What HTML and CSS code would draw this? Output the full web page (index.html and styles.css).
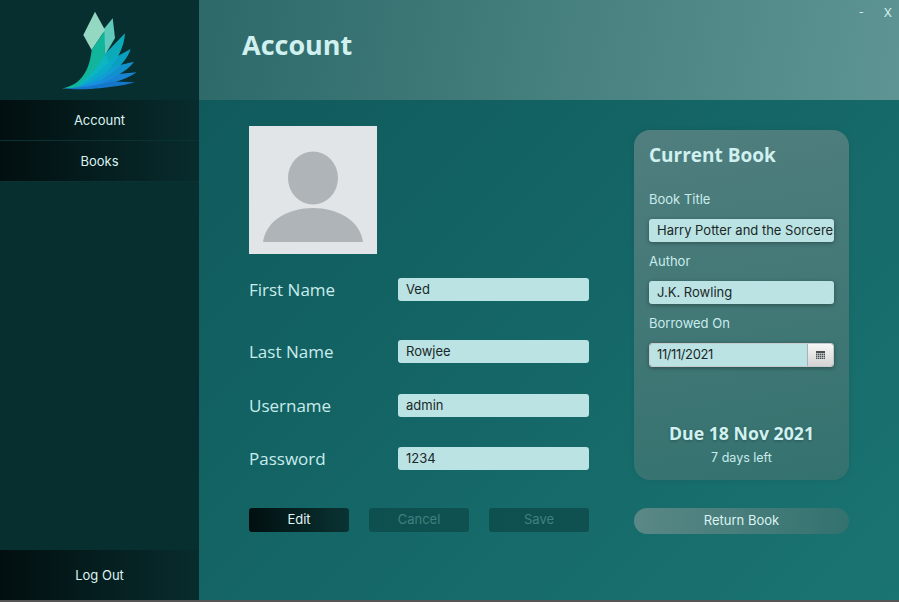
FILE: index.html
```html
<!DOCTYPE html>
<html lang="en">
<head>
    <meta charset="UTF-8">
    <meta name="viewport" content="width=device-width, initial-scale=1.0">
    <title>Account</title>
    <link rel="stylesheet" href="styles.css">
</head>
<body>
    <div id="window">
        <aside id="sidebar">
            <div id="logo">
                <svg width="100" height="90" viewBox="0 0 100 90">
                    <polygon points="62.7,13.3 53,25 55,50 65,33" fill="#5fcabb"/>
                    <polygon points="45,6.7 33.3,30 41.7,45 55,25" fill="#95d8c2"/>
                    <path d="M12 83.5 C30 80 39 68 41.7 45 L54.5 26 L55 50 L62 62 L40 83 Z" fill="#10b59c"/>
                    <path d="M28 80 C42 70 50 58 55 49 L75 28.3 C74 42 68 54 60 62 L40 80 Z" fill="#0db4c6" opacity="0.92"/>
                    <path d="M30 80 C44 72 54 62 64 53 L80.7 44 C78 52 72 60 64 66 L42 82 Z" fill="#0aa9cb" opacity="0.92"/>
                    <path d="M28 82 C44 76 56 68 66 61 L84 56.7 C80 62 74 67 66 71 L42 83 Z" fill="#129ad9" opacity="0.92"/>
                    <path d="M22 83 C40 80 56 74 68 69 L86.7 67.3 C80 72 72 75 62 78 L40 84 Z" fill="#1a8ce0" opacity="0.92"/>
                    <path d="M12 83.5 C30 83 50 80 62 76.5 L85 77.3 C72 81 56 83 40 84 C28 84.5 20 84 12 83.5 Z" fill="#1477cc"/>
                </svg>
            </div>
            <nav id="menu">
                <a class="nav-item">Account</a>
                <a class="nav-item">Books</a>
            </nav>
            <a class="nav-item logout">Log Out</a>
        </aside>

        <div id="content">
            <header id="header">
                <h1>Account</h1>
                <div id="controls">
                    <span class="minimize">-</span>
                    <span>X</span>
                </div>
            </header>

            <main id="main">
                <section id="profile">
                    <svg class="avatar" width="128" height="128" viewBox="0 0 128 128">
                        <rect width="128" height="128" fill="#e2e5e8"/>
                        <ellipse cx="64" cy="52" rx="25" ry="26.5" fill="#afb4b8"/>
                        <path d="M14 116 C17 94 40 82 64 82 C88 82 111 94 114 116 Z" fill="#afb4b8"/>
                    </svg>

                    <div id="fields">
                        <div class="field-row first">
                            <label>First Name</label>
                            <div class="text-field">Ved</div>
                        </div>
                        <div class="field-row second">
                            <label>Last Name</label>
                            <div class="text-field">Rowjee</div>
                        </div>
                        <div class="field-row third">
                            <label>Username</label>
                            <div class="text-field">admin</div>
                        </div>
                        <div class="field-row">
                            <label>Password</label>
                            <div class="text-field">1234</div>
                        </div>
                    </div>

                    <div id="buttons">
                        <button class="btn active">Edit</button>
                        <button class="btn">Cancel</button>
                        <button class="btn">Save</button>
                    </div>
                </section>

                <section id="book">
                    <div id="card">
                        <h2>Current Book</h2>
                        <div class="card-label first-label">Book Title</div>
                        <div class="text-field card-field">Harry Potter and the Sorcerer's Stone</div>
                        <div class="card-label">Author</div>
                        <div class="text-field card-field">J.K. Rowling</div>
                        <div class="card-label">Borrowed On</div>
                        <div class="date-picker">
                            <div class="date-value">11/11/2021</div>
                            <div class="date-btn">
                                <svg width="9" height="8" viewBox="0 0 9 8">
                                    <rect width="9" height="8" fill="#4a4f52"/>
                                    <path d="M0 2.5H9M0 4.5H9M0 6.5H9M1.5 2V8M3.5 2V8M5.5 2V8M7.5 2V8" stroke="#d5d8d9" stroke-width="0.6"/>
                                </svg>
                            </div>
                        </div>
                        <div id="due">
                            <div class="due-date">Due 18 Nov 2021</div>
                            <div class="days-left">7 days left</div>
                        </div>
                    </div>
                    <button id="returnBtn">Return Book</button>
                </section>
            </main>
        </div>
    </div>
</body>
</html>
```

FILE: styles.css
```css
* {
    box-sizing: border-box;
}

html, body {
    margin: 0;
    height: 100%;
    overflow: hidden;
}

body {
    background-color: #555;
    font-family: 'Inter', sans-serif;
    color: #c9ecec;
}

#window {
    display: flex;
    height: 600px;
}

#sidebar {
    width: 199px;
    display: flex;
    flex-direction: column;
    background: #082f30;
}

#logo {
    height: 100px;
    padding: 5px 0 0 50px;
}

#logo svg {
    display: block;
}

#menu {
    flex: 1;
    display: flex;
    flex-direction: column;
}

.nav-item {
    display: flex;
    align-items: center;
    justify-content: center;
    height: 41px;
    font-size: 13px;
    color: #dcf3f3;
    background: linear-gradient(to right, #020f10, #082c2d);
    border-bottom: 1px solid #0a3232;
}

.logout {
    height: 50px;
    border-bottom: none;
}

#content {
    flex: 1;
    display: flex;
    flex-direction: column;
    position: relative;
}

#header {
    height: 100px;
    display: flex;
    align-items: center;
    padding: 0 0 12px 43px;
    background: linear-gradient(100deg, #2c6968, #5e9594);
}

h1 {
    margin: 0;
    font-family: 'Open Sans', sans-serif;
    font-size: 27px;
    font-weight: 700;
    color: #d0f1f0;
}

#controls {
    position: absolute;
    top: 5px;
    right: 7px;
    display: flex;
    gap: 20px;
    font-size: 12px;
    color: #d5efef;
}

.minimize {
    font-size: 11px;
}

#main {
    flex: 1;
    display: flex;
    gap: 45px;
    padding: 26px 0 0 50px;
    background: linear-gradient(135deg, #105a5c, #1a7472);
}

#profile {
    width: 340px;
}

.avatar {
    display: block;
}

#fields {
    margin-top: 24px;
}

.field-row {
    display: flex;
    align-items: center;
    height: 23px;
    margin-bottom: 30px;
}

.field-row.first {
    margin-bottom: 39px;
}

.field-row.second {
    margin-bottom: 31px;
}

.field-row:last-child {
    margin-bottom: 38px;
}

.field-row label {
    width: 149px;
    font-family: 'Open Sans', sans-serif;
    font-size: 17px;
    color: #c9ecec;
}

.text-field {
    width: 191px;
    height: 23px;
    line-height: 22px;
    padding: 0 8px;
    font-size: 13px;
    color: #182828;
    background: #bce3e3;
    border-radius: 3px;
    white-space: nowrap;
    overflow: hidden;
}

#buttons {
    display: flex;
    gap: 20px;
}

.btn {
    width: 100px;
    height: 24px;
    padding: 0 0 2px;
    border: none;
    border-radius: 3px;
    font-family: 'Inter', sans-serif;
    font-size: 13px;
    color: #40807f;
    background: linear-gradient(to right, #0e4f50, #0f5150);
}

.btn.active {
    color: #e2f5f5;
    background: linear-gradient(to right, #020f10, #0a3333);
}

#book {
    width: 215px;
    padding-top: 4px;
}

#card {
    height: 350px;
    padding: 12px 15px 0;
    border-radius: 16px;
    background: linear-gradient(170deg, #507e7e, #34726f);
    display: flex;
    flex-direction: column;
    box-shadow: 0 0 6px rgba(0, 0, 0, 0.08);
}

h2 {
    margin: 0;
    height: 26px;
    font-family: 'Open Sans', sans-serif;
    font-size: 19px;
    line-height: 26px;
    font-weight: 700;
    color: #d0f1f0;
}

.card-label {
    height: 16px;
    margin: 11px 0 12px;
    line-height: 16px;
    font-size: 13px;
    color: #c9ecec;
}

.card-label.first-label {
    margin-top: 23px;
}

.card-field {
    width: 185px;
    flex: none;
    box-shadow: 0 1px 4px rgba(0, 0, 0, 0.35);
}

.date-picker {
    display: flex;
    width: 185px;
    height: 24px;
    flex: none;
    border-radius: 3px;
    overflow: hidden;
    border: 1px solid #c6cccc;
    box-shadow: 0 1px 4px rgba(0, 0, 0, 0.35);
}

.date-value {
    flex: 1;
    line-height: 21px;
    padding-left: 7px;
    font-size: 13px;
    letter-spacing: -0.4px;
    color: #182828;
    background: #bce3e3;
}

.date-btn {
    width: 26px;
    display: flex;
    align-items: center;
    justify-content: center;
    background: linear-gradient(to bottom, #f6f6f6, #d4d4d4);
    border-left: 1px solid #a9b2b2;
}

#due {
    margin-top: 54px;
    text-align: center;
}

.due-date {
    font-family: 'Open Sans', sans-serif;
    font-size: 17.7px;
    font-weight: 700;
    color: #d0f1f0;
    text-shadow: 0 1px 3px rgba(0, 0, 0, 0.25);
}

.days-left {
    margin-top: 5px;
    font-size: 12.5px;
    color: #c9ecec;
}

#returnBtn {
    display: block;
    width: 215px;
    height: 26px;
    margin-top: 28px;
    padding: 0 0 2px;
    border: none;
    border-radius: 13px;
    font-family: 'Inter', sans-serif;
    font-size: 13px;
    color: #dcf3f3;
    background: linear-gradient(to right, #5a8886, #33726f);
}
```
